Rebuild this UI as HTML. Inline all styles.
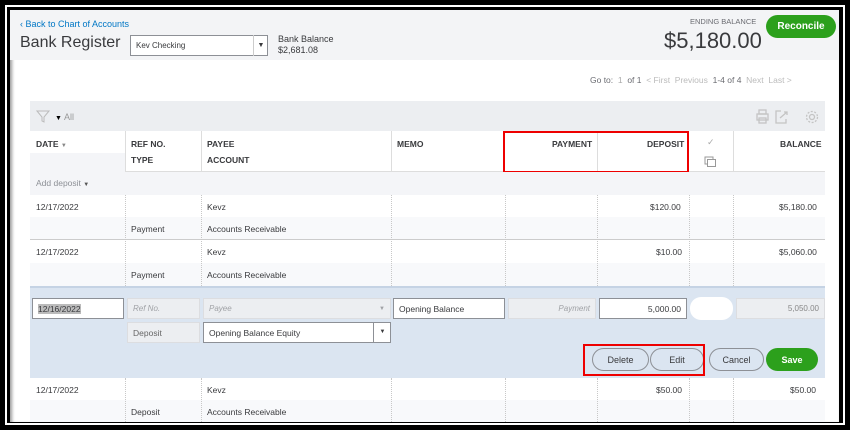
<!DOCTYPE html>
<html><head><meta charset="utf-8"><style>
*{box-sizing:border-box;margin:0;padding:0}
body{width:850px;height:430px;background:#000;position:relative;overflow:hidden;font-family:"Liberation Sans",sans-serif;color:#393a3d}
.a{position:absolute}
.frame{left:5px;top:5px;width:840px;height:420px;border:2px solid #fff}
.in{left:10px;top:10px;width:829px;height:412px;background:#fff;overflow:hidden;box-shadow:inset 2px 2px 3px rgba(0,0,0,.4)}
.t{font-size:8.5px;white-space:nowrap}
.h{font-size:8.5px;font-weight:bold;color:#393a3d}
.vl{width:0;border-left:1px dotted #c8c8c8}
.box{background:#fff;border:1px solid #8d9096;font-size:8.5px;padding:0 5px;display:flex;align-items:center}
.dis{background:#eceef1;border:1px solid #dcdde0;color:#a0a2a6;font-size:8px;padding:0 5px;display:flex;align-items:center}
.btn{border:1px solid #8d9096;border-radius:14px;font-size:9px;display:flex;align-items:center;justify-content:center;color:#393a3d}
</style></head><body>
<div class="a frame"></div>
<div class="a in">
<div class="a" style="left:0;top:0;width:829px;height:50px;background:#f3f4f6"></div>
<div class="a t" style="left:10px;top:9px;color:#0077c5;font-size:9px">‹ Back to Chart of Accounts</div>
<div class="a" style="left:10px;top:24px;font-size:16px;color:#393a3d">Bank Register</div>
<div class="a box" style="left:120px;top:25px;width:138px;height:21px;font-size:8px">Kev Checking</div>
<div class="a" style="left:243px;top:25px;width:15px;height:21px;border-left:1px solid #ccc;font-size:7px;text-align:center;line-height:21px">▼</div>
<div class="a t" style="left:268px;top:24px;font-size:9px;line-height:11px">Bank Balance<br>$2,681.08</div>
<div class="a t" style="left:680px;top:7px;font-size:7.5px;color:#6b6c72">ENDING BALANCE</div>
<div class="a" style="left:654px;top:18px;font-size:22px;color:#393a3d;white-space:nowrap">$5,180.00</div>
<div class="a" style="left:756px;top:5px;width:70px;height:23px;background:#2ca01c;border-radius:12px;color:#fff;font-size:10px;font-weight:bold;display:flex;align-items:center;justify-content:center">Reconcile</div>
<div class="a t" style="left:580px;top:65px;font-size:8.5px;color:#6b6c72">Go to: <span style="color:#aaa">&nbsp;1&nbsp;</span> of 1 &nbsp;<span style="color:#bbb">&lt; First &nbsp;Previous</span> &nbsp;1-4 of 4 &nbsp;<span style="color:#bbb">Next &nbsp;Last &gt;</span></div>
<div class="a" style="left:20px;top:91px;width:795px;height:30px;background:#eceef1"></div>
<svg class="a" style="left:26px;top:100px" width="14" height="13"><path d="M1 1h12l-5 6v5l-2-1V7z" fill="none" stroke="#bbb"/></svg>
<div class="a t" style="left:45px;top:102px;font-size:9px;color:#999"><span style="color:#000;font-size:7px">▼</span> All</div>
<svg class="a" style="left:745px;top:99px" width="70" height="15" fill="none" stroke="#c4c4c4" stroke-width="1.3"><rect x="2" y="5" width="11" height="6"/><rect x="4" y="1" width="7" height="4"/><rect x="4" y="9" width="7" height="5"/><path d="M26 2h-5v12h10v-4M25 9l7-6M29 3h3v3"/><circle cx="57" cy="8" r="2.5"/><circle cx="57" cy="8" r="5.5" stroke-dasharray="2 1.5"/></svg>
<div class="a" style="left:20px;top:121px;width:795px;height:41px;border-bottom:1px solid #ddd"></div>
<div class="a" style="left:20px;top:143px;width:95px;height:19px;background:#f4f5f8"></div>
<div class="a h" style="left:26px;top:129px">DATE <span style="font-size:6px;color:#888">▼</span></div>
<div class="a h" style="left:121px;top:129px">REF NO.</div><div class="a h" style="left:121px;top:145px">TYPE</div>
<div class="a h" style="left:197px;top:129px">PAYEE</div><div class="a h" style="left:197px;top:145px">ACCOUNT</div>
<div class="a h" style="left:387px;top:129px">MEMO</div>
<div class="a h" style="left:542px;top:129px">PAYMENT</div>
<div class="a h" style="left:637px;top:129px">DEPOSIT</div>
<div class="a" style="left:697px;top:127px;color:#aaa;font-size:9px">✓</div>
<svg class="a" style="left:694px;top:146px" width="13" height="12" fill="none" stroke="#999"><rect x="1" y="1" width="8" height="7"/><rect x="3.5" y="3.5" width="8" height="7" fill="#fff"/></svg>
<div class="a h" style="left:770px;top:129px">BALANCE</div>
<div class="a" style="left:115px;top:121px;height:41px;border-left:1px solid #ddd"></div>
<div class="a" style="left:191px;top:121px;height:41px;border-left:1px solid #ddd"></div>
<div class="a" style="left:381px;top:121px;height:41px;border-left:1px solid #ddd"></div>
<div class="a" style="left:587px;top:121px;height:41px;border-left:1px solid #ddd"></div>
<div class="a" style="left:723px;top:121px;height:41px;border-left:1px solid #ddd"></div>
<div class="a" style="left:493px;top:121px;width:186px;height:42px;border:2px solid #e00"></div>
<div class="a" style="left:20px;top:162px;width:795px;height:23px;background:#f4f5f8"></div>
<div class="a t" style="left:26px;top:168px;color:#8d9096">Add deposit <span style="font-size:6px;color:#555">▼</span></div>
<div class="a" style="left:20px;top:207px;width:795px;height:23px;background:#f8f9fb;border-bottom:1px solid #ccc"></div>
<div class="a" style="left:20px;top:253px;width:795px;height:23px;background:#f8f9fb"></div>
<div class="a" style="left:20px;top:390px;width:795px;height:30px;background:#f8f9fb"></div>
<div class="a vl" style="left:115px;top:185px;height:91px"></div>
<div class="a vl" style="left:191px;top:185px;height:91px"></div>
<div class="a vl" style="left:381px;top:185px;height:91px"></div>
<div class="a vl" style="left:495px;top:185px;height:91px"></div>
<div class="a vl" style="left:587px;top:185px;height:91px"></div>
<div class="a vl" style="left:679px;top:185px;height:91px"></div>
<div class="a vl" style="left:723px;top:185px;height:91px"></div>
<div class="a t" style="left:26px;top:192px">12/17/2022</div><div class="a t" style="left:197px;top:192px">Kevz</div>
<div class="a t" style="left:640px;top:192px">$120.00</div><div class="a t" style="left:769px;top:192px">$5,180.00</div>
<div class="a t" style="left:121px;top:214px">Payment</div><div class="a t" style="left:197px;top:214px">Accounts Receivable</div>
<div class="a t" style="left:26px;top:237px">12/17/2022</div><div class="a t" style="left:197px;top:237px">Kevz</div>
<div class="a t" style="left:646px;top:237px">$10.00</div><div class="a t" style="left:769px;top:237px">$5,060.00</div>
<div class="a t" style="left:121px;top:260px">Payment</div><div class="a t" style="left:197px;top:260px">Accounts Receivable</div>
<div class="a" style="left:20px;top:276px;width:795px;height:92px;background:#dbe5f1;border-top:2px solid #c5d3e4"></div>
<div class="a box" style="left:22px;top:288px;width:92px;height:21px"><span style="background:#bbb">12/16/2022</span></div>
<div class="a dis" style="left:117px;top:288px;width:73px;height:21px;font-style:italic">Ref No.</div>
<div class="a dis" style="left:193px;top:288px;width:188px;height:21px;font-style:italic">Payee<span style="margin-left:auto;font-size:6px;font-style:normal">▼</span></div>
<div class="a box" style="left:383px;top:288px;width:112px;height:21px">Opening Balance</div>
<div class="a dis" style="left:498px;top:288px;width:88px;height:21px;justify-content:flex-end;font-style:italic">Payment</div>
<div class="a box" style="left:589px;top:288px;width:88px;height:21px;justify-content:flex-end">5,000.00</div>
<div class="a" style="left:680px;top:287px;width:43px;height:23px;background:#fff;border-radius:11px"></div>
<div class="a dis" style="left:726px;top:288px;width:89px;height:21px;justify-content:flex-end;color:#888">5,050.00</div>
<div class="a dis" style="left:117px;top:312px;width:73px;height:21px;color:#666;font-size:8.5px">Deposit</div>
<div class="a box" style="left:193px;top:312px;width:188px;height:21px">Opening Balance Equity</div>
<div class="a" style="left:363px;top:312px;width:18px;height:21px;border-left:1px solid #8d9096;font-size:6px;text-align:center;line-height:21px">▼</div>
<div class="a btn" style="left:582px;top:338px;width:57px;height:23px">Delete</div>
<div class="a btn" style="left:640px;top:338px;width:54px;height:23px">Edit</div>
<div class="a btn" style="left:699px;top:338px;width:55px;height:23px">Cancel</div>
<div class="a" style="left:756px;top:338px;width:52px;height:23px;background:#2ca01c;border-radius:12px;color:#fff;font-size:9px;font-weight:bold;display:flex;align-items:center;justify-content:center">Save</div>
<div class="a" style="left:573px;top:334px;width:122px;height:32px;border:2px solid #e00"></div>
<div class="a vl" style="left:115px;top:368px;height:52px"></div>
<div class="a vl" style="left:191px;top:368px;height:52px"></div>
<div class="a vl" style="left:381px;top:368px;height:52px"></div>
<div class="a vl" style="left:495px;top:368px;height:52px"></div>
<div class="a vl" style="left:587px;top:368px;height:52px"></div>
<div class="a vl" style="left:679px;top:368px;height:52px"></div>
<div class="a vl" style="left:723px;top:368px;height:52px"></div>
<div class="a t" style="left:26px;top:375px">12/17/2022</div><div class="a t" style="left:197px;top:375px">Kevz</div>
<div class="a t" style="left:646px;top:375px">$50.00</div><div class="a t" style="left:780px;top:375px">$50.00</div>
<div class="a t" style="left:121px;top:397px">Deposit</div><div class="a t" style="left:197px;top:397px">Accounts Receivable</div>
</div>
</body></html>
